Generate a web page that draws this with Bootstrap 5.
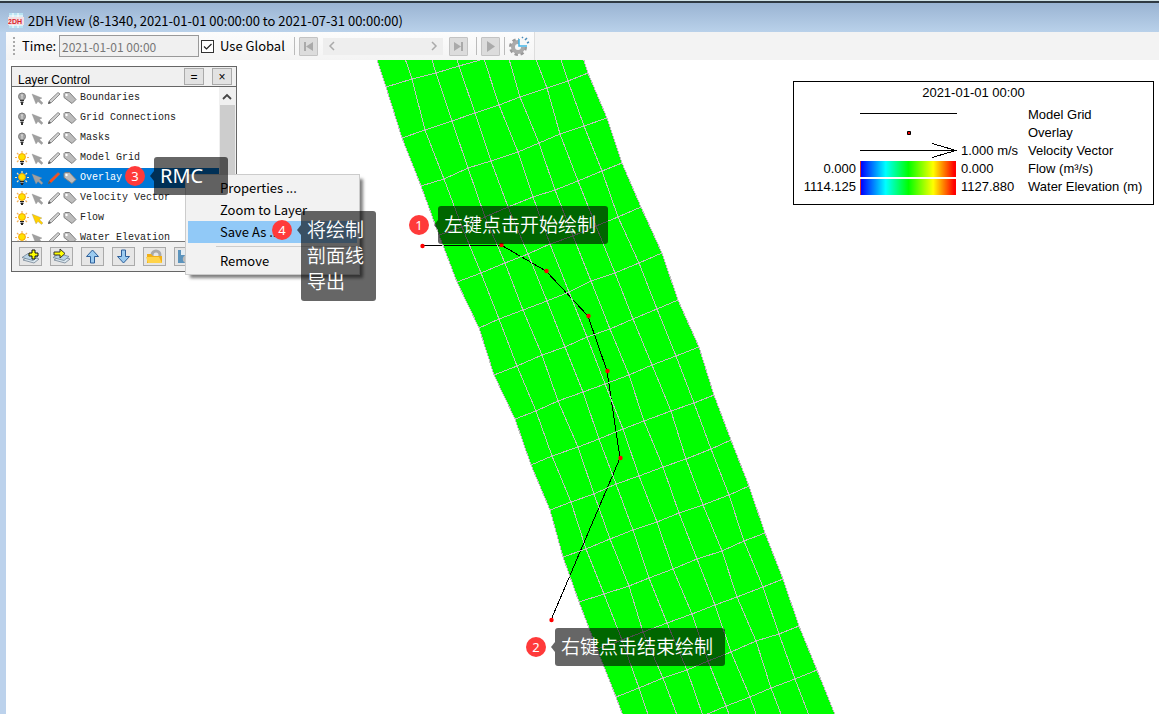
<!DOCTYPE html>
<html lang="en">
<head>
<meta charset="utf-8">
<meta name="viewport" content="width=device-width, initial-scale=1">
<title>2DH View</title>
<link href="https://cdn.jsdelivr.net/npm/bootstrap@5.3.0/dist/css/bootstrap.min.css" rel="stylesheet">
<style>
:root { --ui: "Noto Sans CJK SC", "Noto Sans", sans-serif; }
body { font: 13px/20px var(--ui); color: #000; background: #bcd2ec; }
.win-title { height: 32px; padding: 9px 8px 0; background: linear-gradient(#98b2d1, #b9d1ea); border-top: 1px solid #cfe0e4; box-shadow: inset 0 2px 0 #2f3a42; }
.win-title h1 { font-size: 13px; line-height: 22px; }
.win-body { margin-left: 6px; background: #fff; }
.tools { height: 28px; background: #f3f3f3; }
.strip { width: 529px; height: 28px; padding-left: 7px; background: linear-gradient(#fcfcfc, #f4f4f4); border-right: 1px solid #ddd; }
.grip { width: 2px; height: 18px; margin-right: 7px; background: repeating-linear-gradient(#aaa 0 2px, transparent 2px 4px); }
.strip label[for=time] { width: 32px; }
.time-box { width: 140px; height: 22px; margin-left: 5px; padding: 0 2px; border: 1px solid #999; background: #f0f0f0; color: #777; font: 12px/18px var(--ui); }
.tick { appearance: none; width: 13px; height: 13px; margin: 0 6px 0 2px; border: 1px solid #333; background: #fff url("data:image/svg+xml,%3Csvg xmlns='http://www.w3.org/2000/svg' viewBox='0 0 11 11'%3E%3Cpath d='M2 5.5L4.5 8L9.500 3' fill='none' stroke='%23222' stroke-width='1.200'/%3E%3C/svg%3E"); }
.rule { width: 1px; height: 18px; background: #bbb; }
.tool { width: 19px; height: 19px; padding: 0; border: 1px solid #c3c3c3; background: #dcdcdc; border-radius: 1px; display: flex; }
.slide { width: 120px; height: 17px; margin: 0 6px 0 5px; background: #eee; color: #aaa; }
.bare { border: 0; padding: 0; background: none; display: flex; }
.map { height: calc(100vh - 60px); overflow: hidden; }
.map-art { inset: 0; width: 100%; height: 100%; shape-rendering: crispEdges; }
.layers { left: 5px; top: 6px; width: 226px; border: 1px solid #666; background: #f0f0f0; }
.layers-head { height: 20px; padding: 0 4px 0 6px; border-bottom: 1px solid #666; }
.layers-head h2 { font: 12px/14px "Liberation Sans", sans-serif; margin: 6px auto 0 0; }
.head-btn { width: 20px; height: 17px; margin-top: 1px; padding: 0; border: 1px solid #aaa; background: #e2e2e2; font: 12px/14px "Liberation Sans", sans-serif; color: #000; }
.layer-list { height: 155px; overflow: hidden; background: #fff; border-bottom: 1px solid #777; }
.layer-rows { padding-top: 1px; }
.layer-row { height: 20px; padding: 0 0 0 2px; font: 10px/19px "Liberation Mono", monospace; color: #222; }
.layer-row svg { width: 16px; height: 16px; flex: none; margin-top: 2px; }
.layer-row span { margin-left: 2px; white-space: nowrap; }
.layer-row.on { background: #0078d7; color: #fff; }
.bar { width: 17px; background: #f0f0f0; }
.bar i { display: block; margin: 0 1px; height: 132px; background: #cdcdcd; }
.layers-foot { height: 29px; padding: 0 7px; gap: 8px; }
.foot-btn { width: 23px; height: 19px; padding: 0; border: 1px solid #aaa; background: #e6e6e6; display: flex; justify-content: center; }
.ctx { left: 179px; top: 114px; width: 175px; min-width: 0; padding: 2px; border: 1px solid #ccc; border-radius: 0; background: #f2f2f2; box-shadow: 4px 4px 3px -1px rgba(0,0,0,.5); font-size: 13px; }
.ctx .dropdown-item { padding: 0 0 0 32px; line-height: 22px; color: #000; }
.ctx .hot { background: #91c9f7; }
.ctx .dropdown-divider { margin: 3px 0 3px 28px; border-color: #ccc; opacity: 1; }
.note { gap: 9px; }
.pin { width: 20px; height: 20px; flex: none; margin-top: 9px; border-radius: 50%; background: #ff3a3a; color: #fff; font: 13px/20px "Noto Sans", sans-serif; text-align: center; }
.bubble { position: relative; padding: 6px; border-radius: 3px; background: rgba(0,0,0,.6); color: #fff; font: 19px/26px "Noto Sans", "Noto Sans CJK SC", sans-serif; }
.bubble::before { content: ""; position: absolute; right: 100%; top: 14px; border: 5px solid transparent; border-right: 4px solid rgba(0,0,0,.6); border-left: 0; }
.wide { width: 170px; }
.mid { width: 74px; font-size: 20px; }
.slim { width: 75px; }
.wide, .slim { font-weight: 350; }
.legend { right: 5px; top: 21px; width: 361px; height: 124px; padding: 2px 0 0; border: 1px solid #000; background: #fff; font: 13px/18px "Liberation Sans", sans-serif; }
.legend caption { caption-side: top; padding: 0 0 4px; text-align: center; color: #000; line-height: 18px; }
.legend table { width: 359px; table-layout: fixed; }
.legend td { height: 18px; padding: 0; white-space: nowrap; }
.ramp { width: 96px; height: 16px; background: linear-gradient(90deg, #00f, #0ff 26%, #0f0 50%, #ff0 76%, #f00 98%); border-left: 1px solid #e03030; }
</style>
</head>
<body>
<svg class="d-none" aria-hidden="true">
  <defs>
    <symbol id="bulb-off" viewBox="0 0 16 16"><circle cx="8" cy="6.500" r="3.500" fill="#a4a4a4" stroke="#7c7c7c"/><path d="M7 5h2M8 5v4" stroke="#ddd"/><path d="M6 10h4v1H6zM6.500 12h3v1h-3zM7 13h2v2H7z" fill="#333"/><path d="M6.500 11h3v1h-3z" fill="#999"/></symbol>
    <symbol id="bulb-on" viewBox="0 0 16 16"><path d="M8 1v2M1 7.500h2M13 7.500h2M3 3l1.500 1.500M13 3l-1.500 1.500M3 12l1.500-1.500M13 12l-1.500-1.500" stroke="currentColor" stroke-width="1.200"/><circle cx="8" cy="7" r="3.400" fill="#ffe100" stroke="#f5a300"/><path d="M6 11h4v1H6zM6.500 13h3v1h-3zM7 14h2v1H7z" fill="#222"/><path d="M6.500 12h3v1h-3z" fill="#999"/></symbol>
    <symbol id="cursor" viewBox="0 0 16 16"><path d="M2 4l10 4-2.500 1.500L13 13l-1.500 1.500L8 11.500 6 14z" fill="currentColor" stroke="#888" stroke-opacity=".5" stroke-width=".6"/></symbol>
    <symbol id="pencil" viewBox="0 0 16 16"><path d="M2.500 13.500l1-3L12 2.500l2 1.500-8.500 8.500z" fill="currentColor" stroke="#777" stroke-width=".8"/><path d="M2 14l1-3 2 2z" fill="#555"/></symbol>
    <symbol id="tag" viewBox="0 0 16 16"><path d="M2 3.500L3 2.500h4.500l6.500 7-4 4L2 7.500z" fill="#bdbdbd" stroke="#808080"/><circle cx="4.500" cy="5" r="1.200" fill="#fff"/></symbol>
    <symbol id="sheets" viewBox="0 0 20 16"><path d="M2 12l6-4 10 3-5 4z" fill="#d9e6ee" stroke="#678" stroke-width=".7"/><path d="M1 9.500l6-4 10 3-5 4z" fill="#b9d3e5" stroke="#678" stroke-width=".7"/></symbol>
  </defs>
</svg>

<header class="win-title d-flex align-items-center">
  <svg class="me-1" width="16" height="16" aria-hidden="true"><path d="M1 0h14v15H1z" fill="#b7e2f2"/><path d="M5 0v15M10 0v15M1 3h14M1 12h14" stroke="#fff"/><path d="M0 4h16v8H0z" fill="#f4dfe2"/><text x="0" y="11" font-family="Liberation Sans" font-size="7" font-weight="700" fill="#d81e2c">2DH</text></svg>
  <h1 class="m-0 fw-normal">2DH View (8-1340, 2021-01-01 00:00:00 to 2021-07-31 00:00:00)</h1>
</header>

<main class="win-body">
  <div class="tools">
    <div class="strip d-flex align-items-center">
      <span class="grip"></span>
      <label for="time">Time:</label>
      <input id="time" class="time-box" type="text" value="2021-01-01 00:00" disabled>
      <input id="global" class="tick" type="checkbox" checked>
      <label for="global">Use Global</label>
      <span class="rule ms-auto"></span>
      <button class="tool ms-1" aria-label="First"><svg width="17" height="17"><path d="M4 4h2v9H4zM13 4v9L6 8.500z" fill="#aaa"/></svg></button>
      <div class="slide d-flex justify-content-between align-items-center px-1">
        <button class="bare" aria-label="Back"><svg width="9" height="10"><path d="M7 1L3 5l4 4" fill="none" stroke="#aaa" stroke-width="1.500"/></svg></button>
        <button class="bare" aria-label="Forward"><svg width="9" height="10"><path d="M2 1l4 4-4 4" fill="none" stroke="#aaa" stroke-width="1.500"/></svg></button>
      </div>
      <button class="tool" aria-label="Last"><svg width="17" height="17"><path d="M4 4v9l7-4.500zM11 4h2v9h-2z" fill="#aaa"/></svg></button>
      <span class="rule ms-2 me-1"></span>
      <button class="tool" aria-label="Play"><svg width="17" height="17"><path d="M5 3v11l8-5.500z" fill="#aaa"/></svg></button>
      <span class="rule mx-1"></span>
      <button class="bare me-1" aria-label="Time settings"><svg width="21" height="20"><circle cx="9" cy="11" r="7.500" fill="none" stroke="#999" stroke-width="3" stroke-dasharray="3.300 2.600"/><circle cx="9" cy="11" r="5" fill="none" stroke="#aaa" stroke-width="4"/><path d="M10 1h12v10H10z" fill="#f8f8f8"/><path d="M10 3v7h8" fill="none" stroke="#41b4e6" stroke-width="1.500"/><path d="M13 2l1-1M16 4l2-2M18 7l2-1" stroke="#4a8cba" stroke-width="1.500"/></svg></button>
    </div>
  </div>

  <section class="map position-relative">
    <svg class="map-art position-absolute" aria-label="Model grid"><g id="art" transform="translate(-6 -60)"></g></svg>

    <aside class="layers position-absolute">
      <div class="layers-head d-flex">
        <h2>Layer Control</h2>
        <button class="head-btn me-2">=</button><button class="head-btn">×</button>
      </div>
      <div class="layer-list d-flex">
        <div id="rows" class="layer-rows flex-grow-1"></div>
        <div class="bar"><svg class="d-block" width="17" height="18"><path d="M4 12l4-4 4 4" fill="none" stroke="#444" stroke-width="1.800"/></svg><i></i></div>
      </div>
      <div class="layers-foot d-flex align-items-center">
        <button class="foot-btn" aria-label="Add layer"><svg width="20" height="17"><use href="#sheets" width="20" height="16"/><path d="M11 2h3v3h3v3h-3v3h-3V8H8V5h3z" fill="#ff0" stroke="#111"/></svg></button>
        <button class="foot-btn" aria-label="Load layer"><svg width="20" height="17"><use href="#sheets" width="20" height="16"/><path d="M2 4h6V1l5 4.500L8 10V7H2z" fill="#ff0" stroke="#333"/></svg></button>
        <button class="foot-btn" aria-label="Move up"><svg width="17" height="17"><path d="M8.500 2L14.500 8.500h-4V15h-4V8.500h-4z" fill="#9bcbf0" stroke="#2d5f9a"/></svg></button>
        <button class="foot-btn" aria-label="Move down"><svg width="17" height="17"><path d="M8.500 15L14.500 8.500h-4V2h-4v6.500h-4z" fill="#9bcbf0" stroke="#2d5f9a"/></svg></button>
        <button class="foot-btn" aria-label="Open"><svg width="19" height="17"><circle cx="11" cy="7" r="4" fill="none" stroke="#aaa" stroke-width="3"/><path d="M2 14V6h4l2 2h9v7H2z" fill="#f1af16"/><path d="M1 9h13l3 6H3z" fill="#ffd34a"/></svg></button>
        <button class="foot-btn" aria-label="Save"><svg width="19" height="17"><path d="M2 2h13v13H2z" fill="#5c94bd"/><path d="M5 2h7v5H5z" fill="#e5edf3"/><circle cx="11" cy="11" r="3" fill="none" stroke="#bbb" stroke-width="2.500"/></svg></button>
      </div>
    </aside>

    <ul class="ctx dropdown-menu show">
      <li><button class="dropdown-item">Properties ...</button></li>
      <li><button class="dropdown-item">Zoom to Layer</button></li>
      <li><button class="dropdown-item hot">Save As ...</button></li>
      <li><hr class="dropdown-divider"></li>
      <li><button class="dropdown-item">Remove</button></li>
    </ul>

    <div id="notes"></div>

    <div class="legend position-absolute">
      <table>
        <caption>2021-01-01 00:00</caption>
        <colgroup><col style="width:66px"><col style="width:97px"><col style="width:71px"><col></colgroup>
        <tr><td></td><td><svg class="d-block" width="97" height="18"><path d="M0 7.500h97" stroke="#000"/></svg></td><td></td><td>Model Grid</td></tr>
        <tr><td></td><td><svg class="d-block" width="97" height="18"><path d="M47.500 7.500h3v3h-3z" fill="#e00" stroke="#000"/></svg></td><td></td><td>Overlay</td></tr>
        <tr><td></td><td><svg class="d-block" width="97" height="18"><path d="M0 8.500h97M72 1.500l24 7-24 7" fill="none" stroke="#000" shape-rendering="crispEdges"/></svg></td><td class="ps-1">1.000 m/s</td><td>Velocity Vector</td></tr>
        <tr><td class="text-end pe-1">0.000</td><td><div class="ramp"></div></td><td class="ps-1">0.000</td><td>Flow (m³/s)</td></tr>
        <tr><td class="text-end pe-1">1114.125</td><td><div class="ramp"></div></td><td class="ps-1">1127.880</td><td>Water Elevation (m)</td></tr>
      </table>
    </div>
  </section>
</main>

<script src="https://cdn.jsdelivr.net/npm/bootstrap@5.3.0/dist/js/bootstrap.bundle.min.js"></script>
<script>
// Grid nodes, one row across the channel per line
const grid = [
  [[370,39],[396,32],[421,25],[444,17],[468,10],[491,4],[514,-4],[537,-12],[558,-19]],
  [[386,87],[412,79],[436,73],[459,66],[484,59],[507,52],[530,44],[553,36],[574,29]],
  [[402,138],[425,130],[452,121],[475,113],[499,105],[520,97],[547,88],[568,81],[588,73]],
  [[421,186],[444,179],[468,168],[491,161],[518,152],[539,143],[560,134],[584,126],[607,118]],
  [[439,235],[462,227],[485,217],[508,207],[533,197],[555,190],[578,181],[602,171],[622,163]],
  [[457,282],[481,273],[505,263],[528,254],[550,244],[573,236],[596,226],[618,217],[641,207]],
  [[479,328],[499,319],[523,310],[547,301],[569,292],[591,281],[615,273],[639,263],[662,253]],
  [[494,375],[517,366],[542,355],[565,347],[587,337],[610,329],[633,319],[657,309],[678,300]],
  [[515,419],[536,411],[558,401],[583,392],[605,384],[629,375],[652,365],[676,356],[699,347]],
  [[531,465],[552,456],[578,447],[599,439],[623,429],[644,421],[671,411],[694,403],[714,395]],
  [[550,510],[571,502],[594,494],[616,484],[639,476],[663,467],[686,459],[711,449],[731,440]],
  [[563,557],[586,549],[610,539],[633,530],[657,522],[679,513],[703,505],[729,495],[749,486]],
  [[579,602],[604,594],[629,586],[649,578],[673,569],[697,559],[722,551],[744,541],[765,533]],
  [[597,649],[622,640],[643,632],[667,623],[692,614],[715,605],[737,597],[763,587],[783,579]],
  [[616,697],[639,688],[663,678],[687,670],[708,661],[731,652],[756,641],[779,634],[799,626]],
  [[633,743],[655,735],[680,723],[703,716],[726,706],[750,697],[771,688],[795,679],[817,670]],
  [[651,790],[674,781],[697,772],[720,763],[743,753],[767,744],[789,735],[813,726],[836,717]]
];
const section = [[422,246],[501,245],[546,271],[588,316],[607,371],[620,458],[551,620]];
const first = grid.map(r => r[0]), last = grid.map(r => r[8]);
const line = (pts, colour) => `<polyline points="${pts.join(' ')}" fill="none" stroke="${colour}"/>`;
document.getElementById('art').innerHTML =
  `<polygon points="${first.concat(last.slice().reverse()).join(' ')}" fill="#0f0"/>` +
  line(section, '#000') +
  grid.map(r => line(r, '#c0c0c0')).join('') +
  grid[0].map((_, c) => line(grid.map(r => r[c]), '#c0c0c0')).join('') +
  section.map(p => `<circle cx="${p[0] + .5}" cy="${p[1]}" r="2.200" fill="#f00" shape-rendering="auto"/>`).join('');

const rows = [['Boundaries'],['Grid Connections'],['Masks'],['Model Grid',1],['Overlay',1],['Velocity Vector',1],['Flow',1],['Water Elevation',1]];
const icon = (id, colour) => `<svg style="color:${colour}"><use href="#${id}"/></svg>`;
document.getElementById('rows').innerHTML = rows.map(([name, lit]) =>
  `<div class="layer-row d-flex${name === 'Overlay' ? ' on' : ''}">` +
  icon(lit ? 'bulb-on' : 'bulb-off', name === 'Overlay' ? '#ffe9b0' : '#f3b25c') + icon('cursor', name === 'Flow' ? '#ffd000' : '#a0a0a0') +
  icon('pencil', name === 'Overlay' ? '#ff4a1c' : '#d0d0d0') + icon('tag', '#000') + `<span>${name}</span></div>`).join('');

// Tutorial callouts pinned on the map: x, y, number, text, size class
const notes = [[119,97,3,'RMC','mid'],[403,146,1,'左键点击开始绘制','wide'],[520,568,2,'右键点击结束绘制','wide'],[266,151,4,'将绘制<br>剖面线<br>导出','slim']];
document.getElementById('notes').innerHTML = notes.map(([x, y, n, text, size]) =>
  `<div class="note d-flex position-absolute" style="left:${x}px;top:${y}px;z-index:1001"><span class="pin">${n}</span><div class="bubble ${size}" lang="zh-CN">${text}</div></div>`).join('');
</script>
</body>
</html>
